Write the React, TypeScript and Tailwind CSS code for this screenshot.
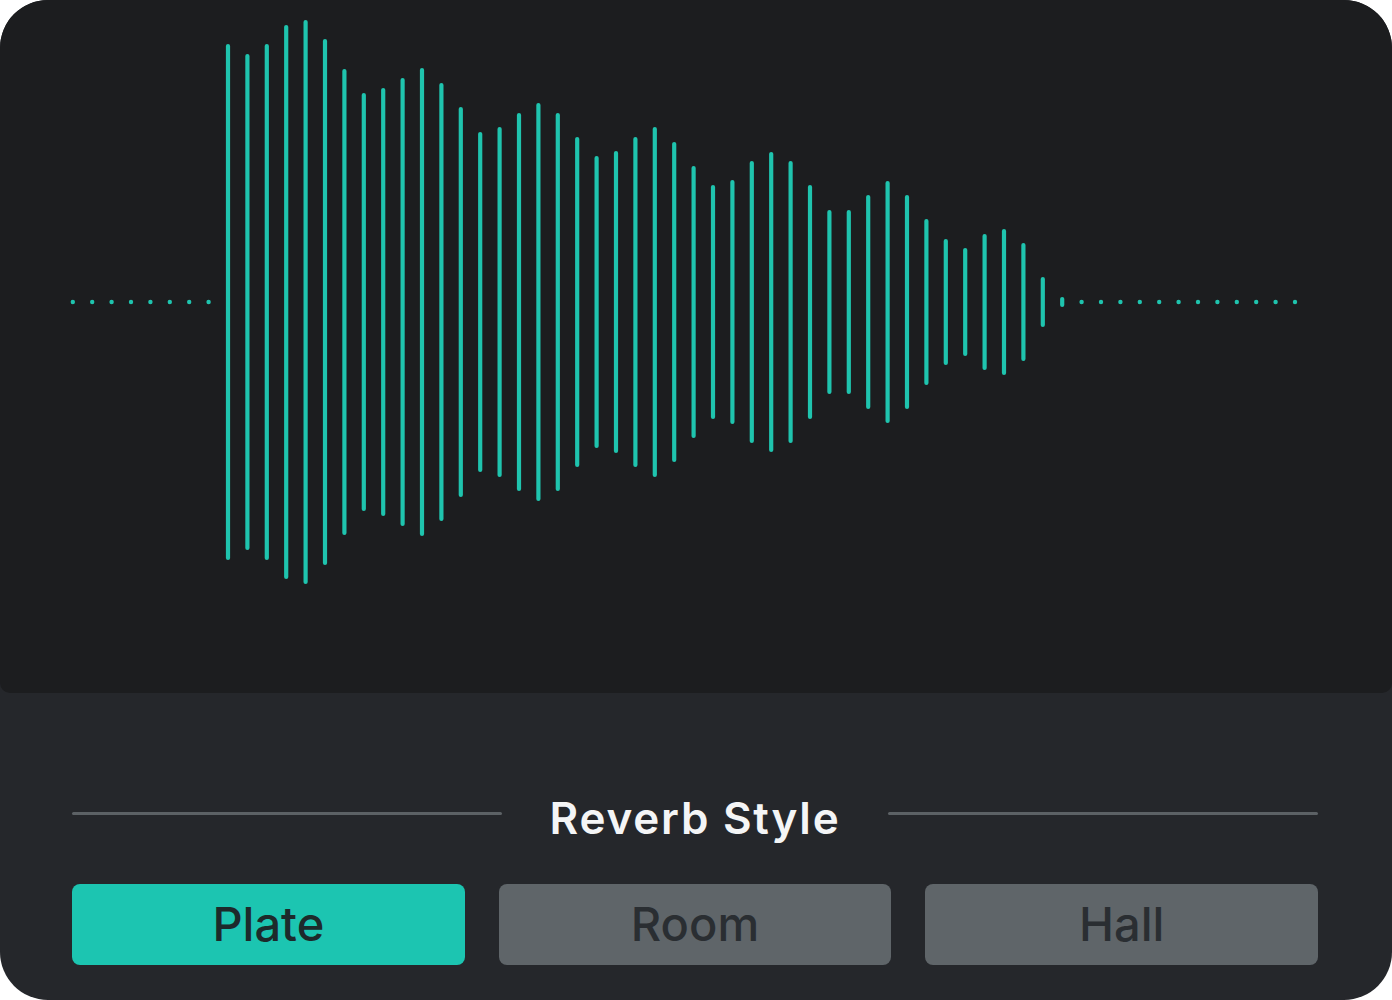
const HALF = [
  258, 248, 258, 277, 282, 263, 233, 209, 214, 224, 234, 219, 195, 170, 175, 189, 199, 189, 165, 146, 151, 165,
  175, 160, 136, 117, 122, 141, 150, 141, 117, 92, 92, 107, 121, 107, 83, 63, 54, 68, 73, 59, 25, 5,
];

const CENTER = 302;
const STEP = 19.4;
const X0 = 72.8;

function Waveform() {
  const items: JSX.Element[] = [];
  for (let i = 0; i < 64; i++) {
    const x = X0 + i * STEP;
    const b = i - 8;
    if (b >= 0 && b < HALF.length) {
      const h = HALF[b];
      items.push(
        <line
          key={i}
          x1={x}
          x2={x}
          y1={CENTER - h + 2}
          y2={CENTER + h - 2}
          stroke="#1fc4ae"
          strokeWidth={4.2}
          strokeLinecap="round"
        />
      );
    } else {
      items.push(<circle key={i} cx={x} cy={CENTER} r={2.2} fill="#1fc4ae" />);
    }
  }
  return (
    <svg width={1392} height={693} viewBox="0 0 1392 693" className="block">
      {items}
    </svg>
  );
}

const STYLES = ['Plate', 'Room', 'Hall'];

export default function App() {
  const active = 'Plate';
  return (
    <div className="w-[1392px] h-[1000px] bg-white" style={{ fontFamily: 'Inter, "Noto Sans", sans-serif' }}>
      <div className="w-full h-full rounded-[48px] overflow-hidden bg-[#25272b] flex flex-col">
        <div className="h-[693px] bg-[#1c1d1f] rounded-b-[10px]">
          <Waveform />
        </div>
        <div className="flex-1 pl-[72px] pr-[74px] pt-[92px] flex flex-col">
          <div className="h-[56px] flex items-center gap-12">
            <div className="flex-1 h-[3px] bg-[#5c6165] rounded-full" />
            <h2 className="pt-[10px] text-[44px] font-semibold text-[#f4f5f6] tracking-[0.04em] leading-none">
              Reverb Style
            </h2>
            <div className="flex-1 h-[3px] bg-[#5c6165] rounded-full" />
          </div>
          <div className="mt-[43px] grid grid-cols-3 gap-[34px]">
            {STYLES.map((s) => (
              <button
                key={s}
                className={
                  s === active
                    ? 'h-[81px] rounded-[8px] bg-[#1cc5b1] text-[#1d2a2b] text-[47px] font-medium'
                    : 'h-[81px] rounded-[8px] bg-[#5f6569] text-[#2a2e32] text-[47px] font-medium'
                }
              >
                {s}
              </button>
            ))}
          </div>
        </div>
      </div>
    </div>
  );
}
